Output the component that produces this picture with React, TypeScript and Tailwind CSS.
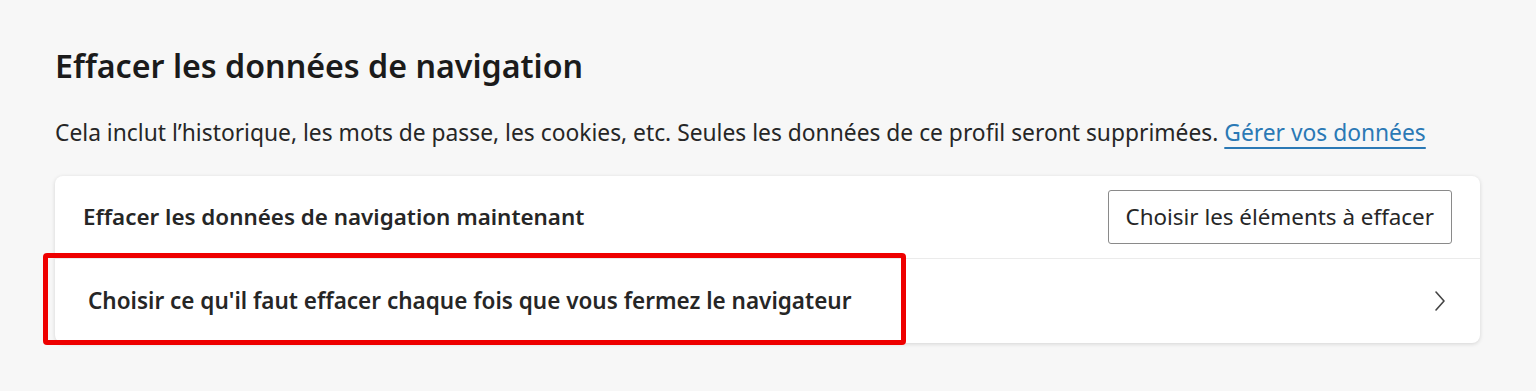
import React from 'react';

const font = { fontFamily: '"Noto Sans", "Open Sans", sans-serif' };

export default function App() {
  return (
    <div className="h-[391px] w-full bg-[#f7f7f7] pl-[55px] pr-[56px] pt-[44px]" style={font}>
      <h1 className="text-[32.2px] font-semibold leading-[44px] text-[#1b1b1b]">
        Effacer les données de navigation
      </h1>
      <p className="mt-[30px] whitespace-nowrap text-[22.8px] leading-[30px] text-[#262626]">
        Cela inclut l’historique, les mots de passe, les cookies, etc. Seules les données de ce profil seront supprimées.{' '}
        <a className="text-[#2b79b5] underline decoration-[#2b79b5] decoration-2 underline-offset-[6px]" href="#">
          Gérer vos données
        </a>
      </p>
      <div className="relative mt-[28px] rounded-[8px] bg-white shadow-[0_1px_4px_rgba(0,0,0,0.14)]">
        <div className="flex h-[83px] items-center justify-between border-b border-[#ebebeb] pl-[28px] pr-[28px]">
          <span className="text-[22.4px] font-semibold text-[#262626]">
            Effacer les données de navigation maintenant
          </span>
          <button className="h-[54px] rounded-[3px] border border-[#8a8a8a] bg-white px-[17px] text-[22.4px] text-[#262626]">
            Choisir les éléments à effacer
          </button>
        </div>
        <div className="flex h-[84px] items-center justify-between pl-[33px] pr-[32px]">
          <span className="text-[22.5px] font-semibold text-[#262626]">
            Choisir ce qu'il faut effacer chaque fois que vous fermez le navigateur
          </span>
          <svg width="16" height="22" viewBox="0 0 16 22" fill="none">
            <path d="M4 2l8 9-8 9" stroke="#444" strokeWidth="1.6" strokeLinecap="round" strokeLinejoin="round" />
          </svg>
        </div>
        <div className="pointer-events-none absolute left-[-12px] top-[77px] h-[92px] w-[863px] rounded-[4px] border-[5px] border-[#ee0000]" />
      </div>
    </div>
  );
}
